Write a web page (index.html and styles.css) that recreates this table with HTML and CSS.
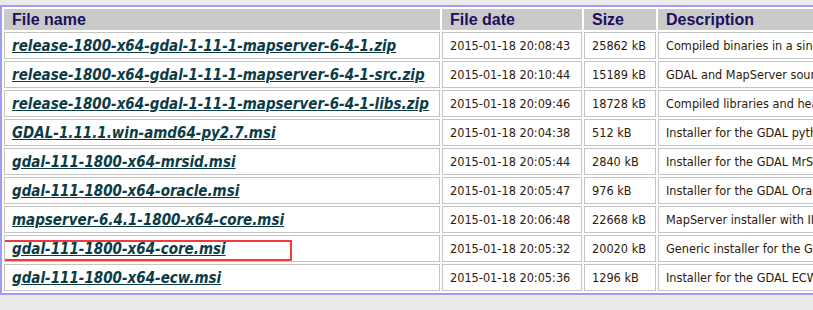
FILE: index.html
```html
<!DOCTYPE html>
<html>
<head>
<meta charset="utf-8">
<link rel="stylesheet" href="styles.css">
</head>
<body>
<div class="frame">
  <table class="files">
    <colgroup>
      <col class="c-name"><col class="c-date"><col class="c-size"><col class="c-desc">
    </colgroup>
    <thead>
      <tr><th>File name</th><th>File date</th><th>Size</th><th>Description</th></tr>
    </thead>
    <tbody>
      <tr><td><a href="#">release-1800-x64-gdal-1-11-1-mapserver-6-4-1.zip</a></td><td>2015-01-18 20:08:43</td><td>25862 kB</td><td>Compiled binaries in a single .zip package</td></tr>
      <tr><td><a href="#">release-1800-x64-gdal-1-11-1-mapserver-6-4-1-src.zip</a></td><td>2015-01-18 20:10:44</td><td>15189 kB</td><td>GDAL and MapServer sources</td></tr>
      <tr><td><a href="#">release-1800-x64-gdal-1-11-1-mapserver-6-4-1-libs.zip</a></td><td>2015-01-18 20:09:46</td><td>18728 kB</td><td>Compiled libraries and headers</td></tr>
      <tr><td><a href="#">GDAL-1.11.1.win-amd64-py2.7.msi</a></td><td>2015-01-18 20:04:38</td><td>512 kB</td><td>Installer for the GDAL python bindings</td></tr>
      <tr><td><a href="#">gdal-111-1800-x64-mrsid.msi</a></td><td>2015-01-18 20:05:44</td><td>2840 kB</td><td>Installer for the GDAL MrSID plugin</td></tr>
      <tr><td><a href="#">gdal-111-1800-x64-oracle.msi</a></td><td>2015-01-18 20:05:47</td><td>976 kB</td><td>Installer for the GDAL Oracle plugin</td></tr>
      <tr><td><a href="#">mapserver-6.4.1-1800-x64-core.msi</a></td><td>2015-01-18 20:06:48</td><td>22668 kB</td><td>MapServer installer with IIS support</td></tr>
      <tr><td class="marked"><a href="#">gdal-111-1800-x64-core.msi</a><span class="highlight"></span></td><td>2015-01-18 20:05:32</td><td>20020 kB</td><td>Generic installer for the GDAL core components</td></tr>
      <tr><td><a href="#">gdal-111-1800-x64-ecw.msi</a></td><td>2015-01-18 20:05:36</td><td>1296 kB</td><td>Installer for the GDAL ECW plugin</td></tr>
    </tbody>
  </table>
</div>
</body>
</html>
```
FILE: styles.css
```css
html, body {
  margin: 0;
  padding: 0;
  background: #ebebeb;
  overflow: hidden;
}
body {
  padding-top: 5px;
}
.frame {
  width: 1100px;
  border: 2px solid #a09cf0;
  border-right: none;
  background: #ffffff;
}
.files {
  border-collapse: separate;
  border-spacing: 2px;
  table-layout: fixed;
  width: 1098px;
  font-family: "DejaVu Sans Condensed", "DejaVu Sans", sans-serif;
  font-size: 12.6px;
  color: #2e1a0c;
}
.c-name { width: 436px; }
.c-date { width: 140px; }
.c-size { width: 72px; }
.files th {
  background: #cacaca;
  border: 1px solid #cacaca;
  height: 19px;
  padding: 0 7px;
  text-align: left;
  font-family: "Liberation Sans", Arial, sans-serif;
  font-weight: bold;
  font-size: 16px;
  line-height: 19px;
  color: #1b0f5e;
}
.files td {
  border: 1px solid #c4c4c4;
  height: 25px;
  padding: 0 7px;
  white-space: nowrap;
  overflow: hidden;
  vertical-align: middle;
}
.files a {
  font-weight: bold;
  font-style: italic;
  font-size: 15px;
  color: #0b3b45;
  text-decoration: underline;
}
.marked {
  position: relative;
  overflow: visible;
}
.highlight {
  position: absolute;
  left: -2px;
  top: 4px;
  width: 285px;
  height: 17px;
  border: 2px solid #f03a3e;
}
```
